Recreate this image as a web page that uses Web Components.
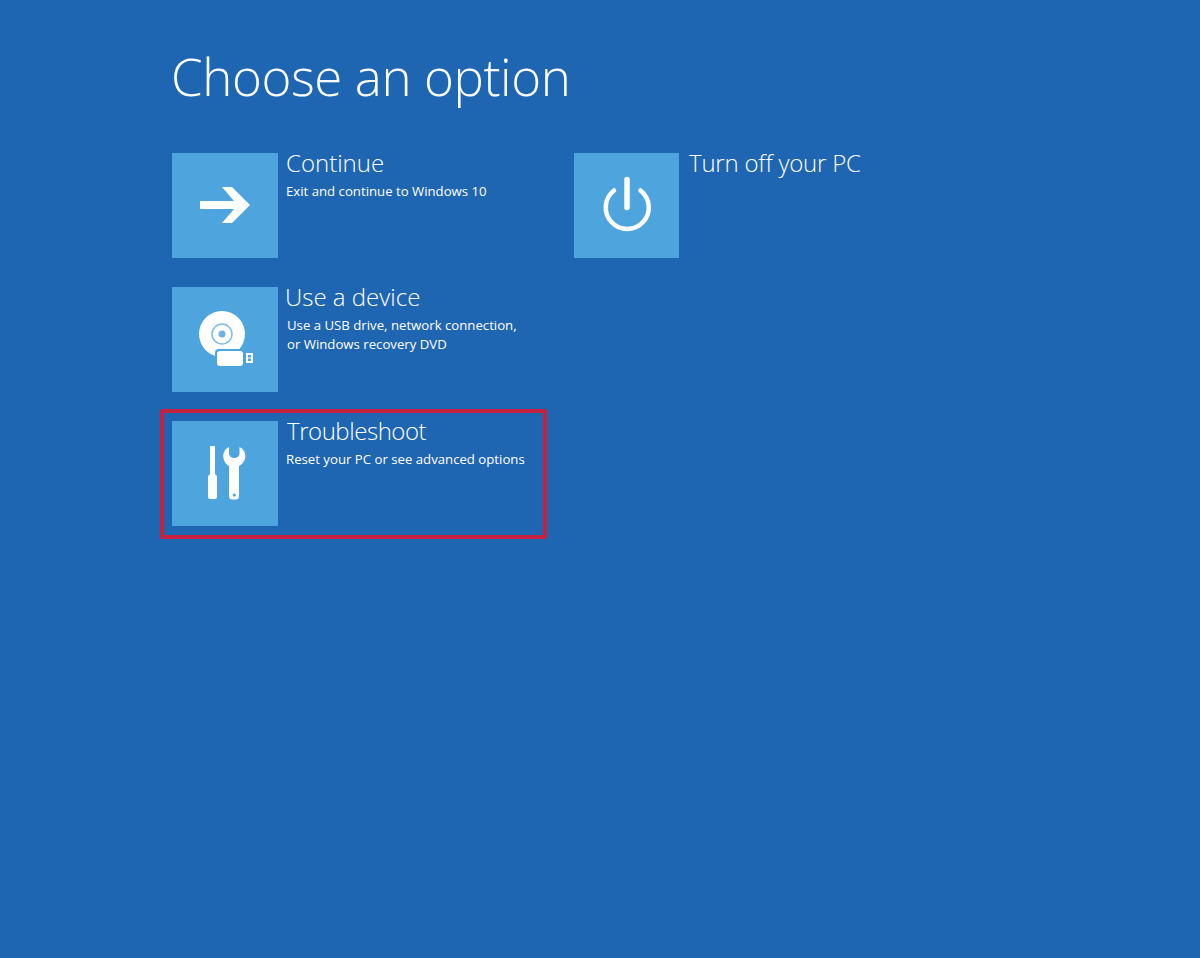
<!DOCTYPE html>
<html>
<head>
<meta charset="utf-8">
<title>Choose an option</title>
<style>
html, body { margin: 0; height: 100%; background: #1f66b2; }
body { font-family: "Open Sans", "Liberation Sans", sans-serif; color: #fff; overflow: hidden; }
</style>
</head>
<body>
<recovery-screen heading="Choose an option">
	<option-tile slot="left" title="Continue">
		<svg slot="icon" width="106" height="105" viewBox="0 0 106 105"><path d="M28 48H62L50 34H60L78 52 60 70H50L62 56H28z" fill="#fff"/></svg>
		Exit and continue to Windows 10
	</option-tile>
	<option-tile slot="left" title="Use a device" style="--title-x:-1px;--text-x:1px">
		<svg slot="icon" width="106" height="105" viewBox="0 0 106 105">
			<circle cx="50" cy="47" r="23" fill="#fff"/>
			<circle cx="50" cy="47" r="10" fill="none" stroke="#7fbde6" stroke-width="1.500"/>
			<circle cx="50" cy="47" r="3.500" fill="#6fb3e2"/>
			<rect x="43" y="62" width="30" height="19" rx="4" fill="#4ea5de"/>
			<rect x="45" y="64" width="26" height="15" rx="3" fill="#fff"/>
			<path d="M74 66h7v10h-7z" fill="#fff"/>
			<path d="M76 68h3v2.500h-3zM76 71.500h3v2.500h-3z" fill="#4ea5de"/>
		</svg>
		Use a USB drive, network connection,<br>or Windows recovery DVD
	</option-tile>
	<option-tile slot="left" title="Troubleshoot" style="--title-x:1px;--title-track:-0.45px">
		<svg slot="icon" width="106" height="105" viewBox="0 0 106 105">
			<path d="M38 25h5v28l2 2V76a2 2 0 0 1-2 2h-5a2 2 0 0 1-2-2V55l2-2z" fill="#fff"/>
			<path fill-rule="evenodd" d="M57 26v6.500c0 3 2.800 4.500 5.300 4.500s5.200-1.500 5.200-4.500V26c3.500 1.500 5.800 5 5.800 9 0 4.500-2.800 8-6.300 10V75a3.500 3.500 0 0 1-3.500 3.500h-3A3.500 3.500 0 0 1 57 75V45c-3.500-2-5.700-5.500-5.700-10 0-4 2.200-7.500 5.700-9zM62.300 72.500a1.600 1.600 0 1 0 0 3.200 1.600 1.600 0 0 0 0-3.200z" fill="#fff"/>
		</svg>
		Reset your PC or see advanced options
	</option-tile>
	<option-tile slot="right" title="Turn off your PC" narrow style="--title-x:2px;--title-track:-0.2px">
		<svg slot="icon" width="105" height="105" viewBox="0 0 105 105">
			<path d="M40 37.500a21.500 21.500 0 1 0 26.500 0" fill="none" stroke="#fff" stroke-width="4.500" stroke-linecap="round"/>
			<path d="M53 26.500v28" fill="none" stroke="#fff" stroke-width="5.500" stroke-linecap="round"/>
		</svg>
	</option-tile>
</recovery-screen>

<script>
class RecoveryScreen extends HTMLElement {
	constructor() {
		super();
		this.attachShadow({ mode: 'open' });
	}

	static get styles() {
		return /*css*/ `
		:host {
			display: block;
			padding: 40px 0 0 172px;
		}
		h1 {
			margin: 0 0 40px -1px;
			font-size: 51px;
			line-height: 73px;
			font-weight: 300;
			letter-spacing: -0.4px;
		}
		.cols {
			display: grid;
			grid-template-columns: 402px 1fr;
		}
		.col {
			display: flex;
			flex-direction: column;
			gap: 29px;
		}
		`;
	}

	connectedCallback() {
		this.shadowRoot.innerHTML = /* html */ `
		<style>${RecoveryScreen.styles}</style>
		<h1>${this.getAttribute('heading')}</h1>
		<div class="cols">
			<div class="col"><slot name="left"></slot></div>
			<div class="col"><slot name="right"></slot></div>
		</div>
		`;
	}
}

class OptionTile extends HTMLElement {
	constructor() {
		super();
		this.attachShadow({ mode: 'open' });
	}

	static get styles() {
		return /*css*/ `
		:host {
			display: flex;
			position: relative;
			height: 105px;
		}
		/* marco rojo sobre la opcion Troubleshoot */
		:host([title="Troubleshoot"])::after {
			content: '';
			position: absolute;
			left: -12px;
			top: -12px;
			width: 379px;
			height: 122px;
			border: 4px solid #c4223e;
			border-radius: 2px;
		}
		.tile {
			flex: none;
			width: 106px;
			height: 105px;
			background: #4ea5de;
		}
		:host([narrow]) .tile {
			width: 105px;
		}
		.tile ::slotted(svg) {
			display: block;
		}
		.text {
			min-width: 0;
			margin: -5px 0 0 8px;
		}
		h2 {
			margin: 0 0 0 var(--title-x, 0);
			font-size: 24px;
			line-height: 30px;
			font-weight: 300;
			letter-spacing: var(--title-track, 0);
			white-space: nowrap;
		}
		p {
			margin: 4px 0 0 var(--text-x, 0);
			font-size: 13.200px;
			line-height: 19px;
			font-weight: 400;
			white-space: nowrap;
		}
		`;
	}

	connectedCallback() {
		this.shadowRoot.innerHTML = /* html */ `
		<style>${OptionTile.styles}</style>
		<div class="tile"><slot name="icon"></slot></div>
		<div class="text">
			<h2>${this.getAttribute('title')}</h2>
			<p><slot></slot></p>
		</div>
		`;
	}
}

customElements.define('recovery-screen', RecoveryScreen);
customElements.define('option-tile', OptionTile);
</script>
</body>
</html>
